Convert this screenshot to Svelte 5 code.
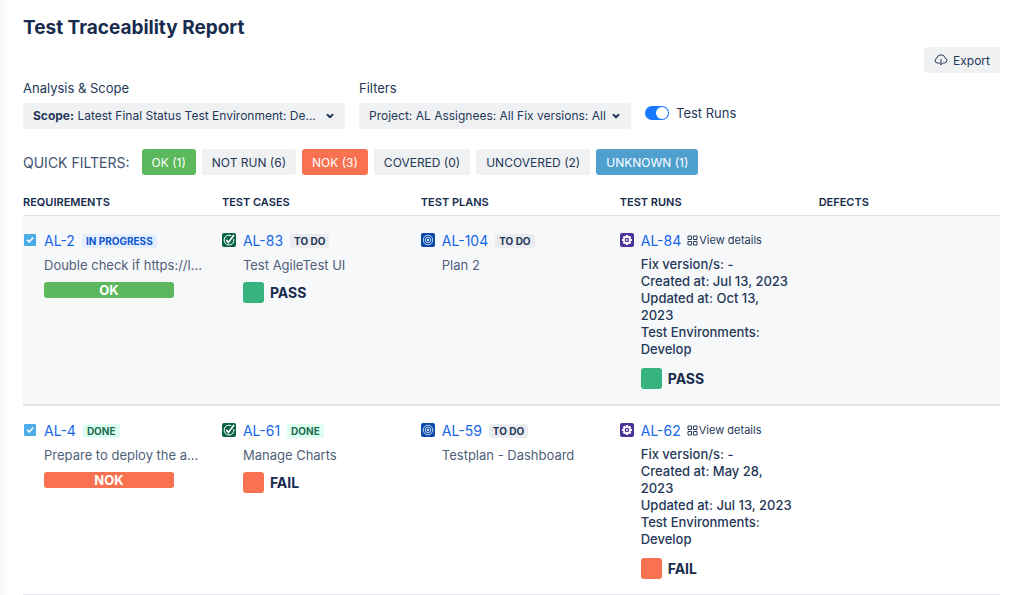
<script lang="ts">
  type Status = 'TO DO' | 'DONE' | 'IN PROGRESS';
  type Result = 'PASS' | 'FAIL';

  let showRuns = true;

  const quickFilters = [
    { label: 'OK', count: 1, tone: 'ok' },
    { label: 'NOT RUN', count: 6, tone: '' },
    { label: 'NOK', count: 3, tone: 'nok' },
    { label: 'COVERED', count: 0, tone: '' },
    { label: 'UNCOVERED', count: 2, tone: '' },
    { label: 'UNKNOWN', count: 1, tone: 'unknown' },
  ];

  const columns = ['Requirements', 'Test cases', 'Test plans', 'Test runs', 'Defects'];

  const rows = [
    {
      requirement: { key: 'AL-2', status: 'IN PROGRESS' as Status, name: 'Double check if https://l...', coverage: 'OK' },
      testCase: { key: 'AL-83', status: 'TO DO' as Status, name: 'Test AgileTest UI', result: 'PASS' as Result },
      plan: { key: 'AL-104', status: 'TO DO' as Status, name: 'Plan 2' },
      run: { key: 'AL-84', created: 'Jul 13, 2023', updated: 'Oct 13,\n2023', result: 'PASS' as Result },
    },
    {
      requirement: { key: 'AL-4', status: 'DONE' as Status, name: 'Prepare to deploy the a...', coverage: 'NOK' },
      testCase: { key: 'AL-61', status: 'DONE' as Status, name: 'Manage Charts', result: 'FAIL' as Result },
      plan: { key: 'AL-59', status: 'TO DO' as Status, name: 'Testplan - Dashboard' },
      run: { key: 'AL-62', created: 'May 28,\n2023', updated: 'Jul 13, 2023', result: 'FAIL' as Result },
    },
  ];

  function slug(text: string) {
    return text.toLowerCase().replace(' ', '-');
  }
</script>

<main>
  <h1>Test Traceability Report</h1>

  <div class="actions">
    <button class="btn export">
      <svg width="14" height="14" viewBox="0 0 14 14" fill="none" stroke="currentColor" stroke-linecap="round" stroke-linejoin="round">
        <path d="M4.5 10H3.4a2.5 2.5 0 0 1-.5-4.9 4.2 4.2 0 0 1 8.2 0 2.5 2.5 0 0 1-.5 4.9H9.5" />
        <path d="M7 6.5v5M5.500 10.200 7 11.700l1.500-1.500" />
      </svg>
      Export
    </button>
  </div>

  <div class="scope">
    <div class="field">
      <span id="scope-label">Analysis &amp; Scope</span>
      <button class="btn dropdown scope-btn" aria-haspopup="true" aria-describedby="scope-label">
        <span><b>Scope:</b> Latest Final Status Test Environment: De...</span>
        <svg width="10" height="8" viewBox="0 0 10 8"><path d="M2.500 2.800 5 5.200 7.500 2.800" /></svg>
      </button>
    </div>
    <div class="field">
      <span id="filter-label">Filters</span>
      <button class="btn dropdown filter-btn" aria-haspopup="true" aria-describedby="filter-label">
        <span>Project: AL Assignees: All Fix versions: All</span>
        <svg width="10" height="8" viewBox="0 0 10 8"><path d="M2.500 2.800 5 5.200 7.500 2.800" /></svg>
      </button>
    </div>
    <label class="toggle">
      <input type="checkbox" role="switch" bind:checked={showRuns} />
      Test Runs
    </label>
  </div>

  <div class="quick">
    <span>QUICK FILTERS:</span>
    {#each quickFilters as filter}
      <button class="btn {filter.tone}">{filter.label} ({filter.count})</button>
    {/each}
  </div>

  <table>
    <thead>
      <tr>
        {#each columns as column}
          <th scope="col">{column}</th>
        {/each}
      </tr>
    </thead>
    <tbody>
      {#each rows as row}
        <tr>
          <td>
            <div class="issue">
              <svg viewBox="0 0 14 14">
                <rect x="1" y="1" width="12" height="12" rx="1" fill="#4bade8" />
                <path d="M4.500 7.200 6.300 9 9.700 5" fill="none" stroke="#fff" stroke-width="1.600" stroke-linecap="round" stroke-linejoin="round" />
              </svg>
              <a href="#{row.requirement.key}">{row.requirement.key}</a>
              <span class="lozenge {slug(row.requirement.status)}">{row.requirement.status}</span>
            </div>
            <div class="body">
              <p class="name">{row.requirement.name}</p>
              <div class="bar {slug(row.requirement.coverage)}">{row.requirement.coverage}</div>
            </div>
          </td>
          <td>
            <div class="issue">
              <svg viewBox="0 0 14 14">
                <rect width="14" height="14" rx="2" fill="#0b6443" />
                <path d="M9.200 2.700A4.900 4.900 0 1 0 11.800 6" fill="none" stroke="#fff" stroke-width="1" />
                <path d="M4.200 6.900 6.400 9.400 12 2" fill="none" stroke="#fff" stroke-width="1.600" />
              </svg>
              <a href="#{row.testCase.key}">{row.testCase.key}</a>
              <span class="lozenge {slug(row.testCase.status)}">{row.testCase.status}</span>
            </div>
            <div class="body">
              <p class="name">{row.testCase.name}</p>
              <div class="result {slug(row.testCase.result)}">{row.testCase.result}</div>
            </div>
          </td>
          <td>
            <div class="issue">
              <svg viewBox="0 0 14 14">
                <rect width="14" height="14" rx="2" fill="#0c4aa8" />
                <g fill="none" stroke="#d5e5fb" stroke-width=".9">
                  <circle cx="7" cy="7" r="4.800" />
                  <circle cx="7" cy="7" r="2.800" />
                </g>
                <circle cx="7" cy="7" r="1.200" fill="#d5e5fb" />
              </svg>
              <a href="#{row.plan.key}">{row.plan.key}</a>
              <span class="lozenge {slug(row.plan.status)}">{row.plan.status}</span>
            </div>
            <div class="body">
              <p class="name">{row.plan.name}</p>
            </div>
          </td>
          <td>
            {#if showRuns}
              <div class="issue">
                <svg viewBox="0 0 14 14">
                  <rect width="14" height="14" rx="2" fill="#4b3299" />
                  <path d="M7 2v10M2 7h10M3.500 3.500l7 7M10.500 3.500l-7 7" stroke="#fff" stroke-width="2.200" />
                  <circle cx="7" cy="7" r="3.900" fill="#fff" />
                  <circle cx="7" cy="7" r="2.300" fill="#4b3299" />
                  <circle cx="7" cy="7" r="1" fill="#fff" />
                </svg>
                <a href="#{row.run.key}">{row.run.key}</a>
                <button class="details">
                  <svg viewBox="0 0 11 11" fill="none" stroke="currentColor">
                    <path d="M1 1h3.500v3.500H1zM6.500 1H10v3.500H6.500zM1 6.500h3.500V10H1zM6.500 6.500H10V10H6.500z" />
                  </svg>
                  View details
                </button>
              </div>
              <div class="body run">
                <p>Fix version/s: -</p>
                <p>Created at: {row.run.created}</p>
                <p>Updated at: {row.run.updated}</p>
                <p>Test Environments: Develop</p>
                <div class="result {slug(row.run.result)}">{row.run.result}</div>
              </div>
            {/if}
          </td>
          <td></td>
        </tr>
      {/each}
    </tbody>
  </table>
</main>

<style>
  :global(body) {
    background: linear-gradient(to right, #f8f8f8, #fff 8px);
    overflow-x: hidden;
  }

  main {
    padding: 16px 24px 0 23px;
    font-family: Inter, 'Liberation Sans', sans-serif;
    font-size: 13px;
    color: #253858;
  }

  h1 {
    margin: 0;
    font-size: 19px;
    line-height: 24px;
    font-weight: 700;
    color: #172b4d;
  }

  p {
    margin: 0;
  }

  button {
    border: none;
    font: inherit;
    color: inherit;
    cursor: pointer;
  }

  .btn {
    height: 26px;
    padding: 0 10px;
    border-radius: 3px;
    background: #f0f1f3;
    font-size: 12px;
    white-space: nowrap;
  }

  .actions {
    display: flex;
    justify-content: flex-end;
    margin-top: 7px;
  }

  .export {
    display: flex;
    align-items: center;
    gap: 5px;
  }

  .scope {
    display: flex;
    gap: 14px;
    margin-top: 6px;
  }

  .field {
    display: flex;
    flex-direction: column;
    gap: 6px;
    line-height: 18px;
  }

  .dropdown {
    display: flex;
    align-items: center;
    justify-content: space-between;
  }

  .dropdown svg {
    fill: none;
    stroke: #253858;
    stroke-width: 2;
    stroke-linecap: round;
    stroke-linejoin: round;
  }

  .scope-btn {
    width: 322px;
  }

  .filter-btn {
    width: 272px;
  }

  .toggle {
    display: flex;
    align-items: center;
    align-self: flex-end;
    gap: 7px;
    height: 32px;
  }

  .toggle input {
    appearance: none;
    display: flex;
    width: 24px;
    height: 14px;
    margin: 0;
    padding: 1px;
    box-sizing: border-box;
    border-radius: 7px;
    background: #8993a4;
    cursor: pointer;
  }

  .toggle input::before {
    content: '';
    width: 12px;
    height: 12px;
    border-radius: 50%;
    background: #fff;
  }

  .toggle input:checked {
    justify-content: flex-end;
    background: #1677ff;
  }

  .quick {
    display: flex;
    align-items: center;
    gap: 6px;
    margin-top: 20px;
  }

  .quick > span {
    margin-right: 6px;
    font-size: 14px;
    color: #42526e;
  }

  .ok {
    background: #5bb85c;
    color: #fff;
  }

  .nok {
    background: #f87150;
    color: #fff;
  }

  .unknown {
    background: #4f9fcf;
    color: #fff;
  }

  table {
    width: 100%;
    margin-top: 14px;
    table-layout: fixed;
    border-collapse: separate;
    border-spacing: 0;
  }

  th {
    padding: 5px 0;
    border-bottom: 1px solid #dfe1e5;
    font-size: 11px;
    line-height: 16px;
    font-weight: 600;
    text-align: left;
    text-transform: uppercase;
    color: #172b4d;
  }

  th:not(:last-child) {
    width: 20.36%;
  }

  td {
    padding: 14px 18px 15px 0;
    border-bottom: 2px solid #e4e5e8;
    vertical-align: top;
  }

  tbody tr:nth-child(odd) {
    background: #f7f8fa;
  }

  .issue {
    display: flex;
    align-items: center;
    height: 20px;
    white-space: nowrap;
  }

  .issue > svg {
    width: 14px;
    height: 14px;
    margin-right: 7px;
  }

  .issue a {
    font-size: 14px;
    color: #1567e8;
    text-decoration: none;
  }

  .lozenge {
    margin: 2px 0 0 7px;
    padding: 0 4px;
    border-radius: 2px;
    background: #ebecf0;
    font-size: 10px;
    line-height: 14px;
    font-weight: 700;
    color: #253858;
  }

  .in-progress {
    background: #e5efff;
    color: #0b55d0;
  }

  .done {
    background: #dcfff1;
    color: #216e4e;
  }

  .details {
    display: flex;
    align-items: center;
    gap: 1px;
    margin-left: 6px;
    padding: 0;
    background: none;
    font-size: 11px;
  }

  .details svg {
    width: 11px;
    height: 11px;
  }

  .body {
    padding: 6px 0 0 21px;
  }

  .name {
    font-size: 13px;
    line-height: 18px;
    color: #505f79;
    white-space: nowrap;
  }

  .bar {
    width: 130px;
    margin-top: 8px;
    border-radius: 3px;
    font-size: 13px;
    line-height: 16px;
    font-weight: 700;
    text-align: center;
  }

  .result {
    display: flex;
    align-items: center;
    gap: 6px;
    margin-top: 8px;
    font-size: 14px;
    font-weight: 700;
    line-height: 21px;
    color: #172b4d;
  }

  .result::before {
    content: '';
    width: 21px;
    height: 21px;
    border-radius: 3px;
  }

  .pass::before {
    background: #36b37e;
  }

  .fail::before {
    background: #f87150;
  }

  .run {
    line-height: 17px;
    font-weight: 500;
    white-space: pre-line;
  }

  .run .result {
    margin-top: 10px;
  }
</style>
